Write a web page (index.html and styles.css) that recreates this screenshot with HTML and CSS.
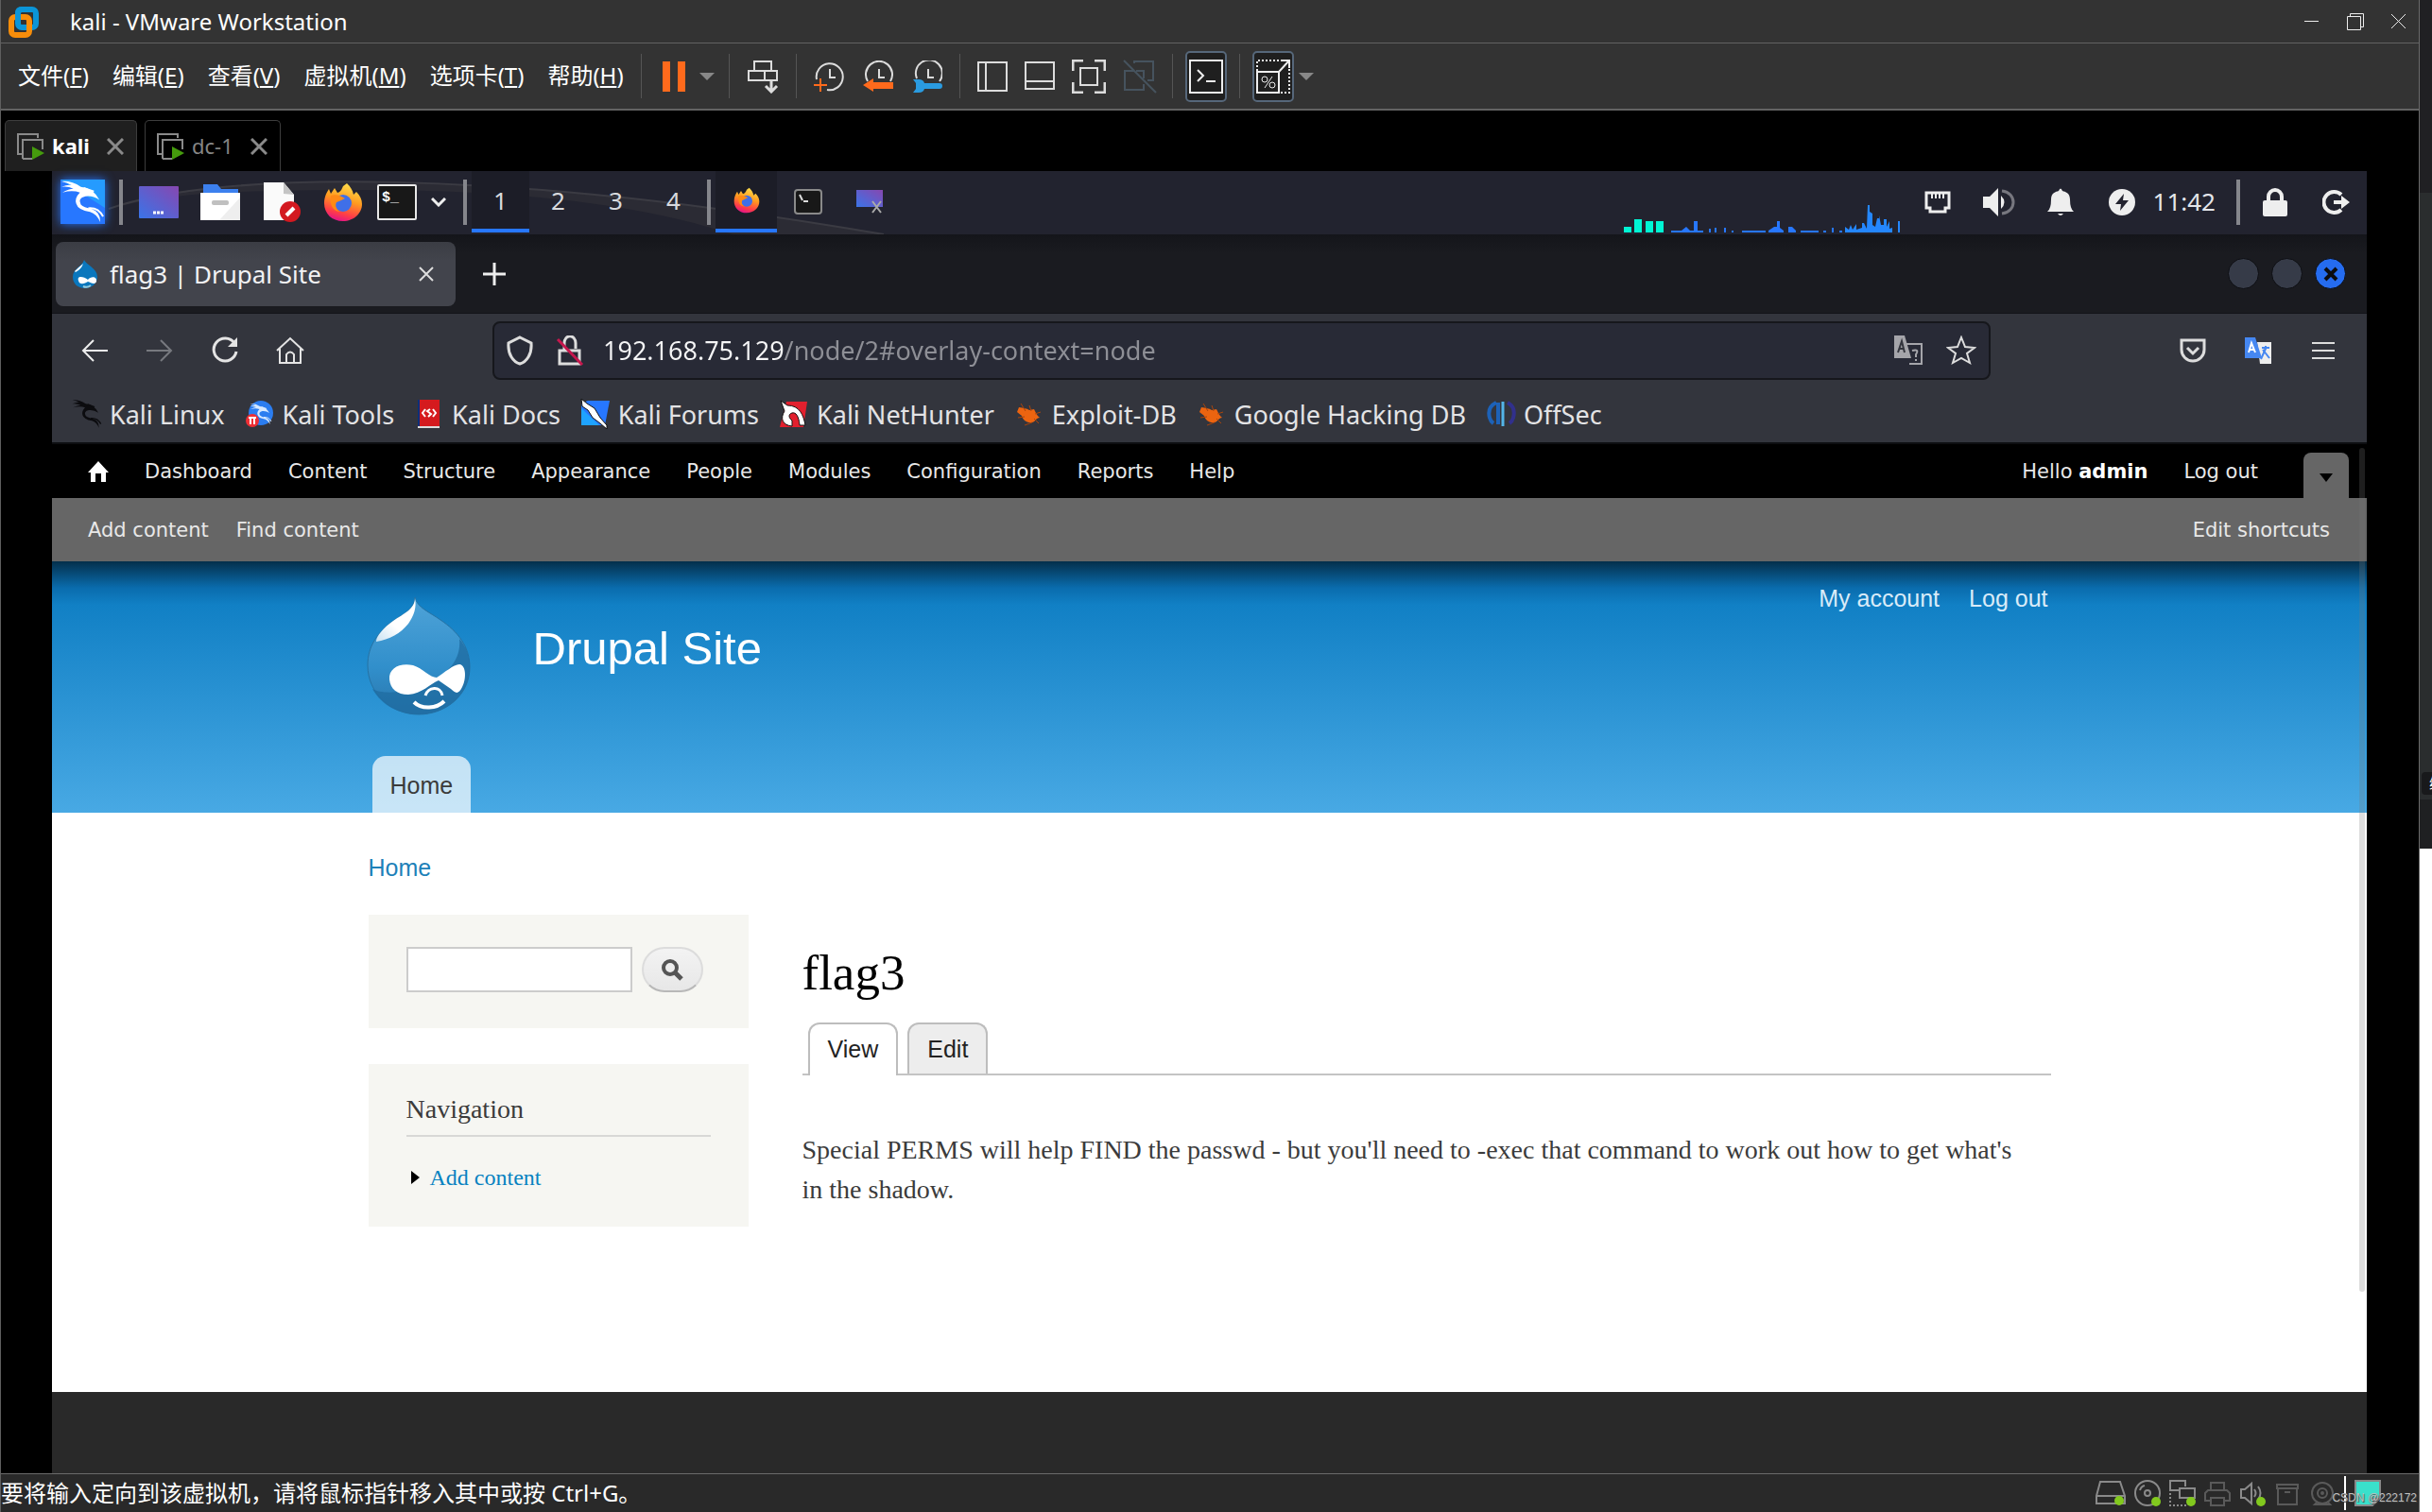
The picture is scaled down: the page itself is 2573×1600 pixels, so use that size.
FILE: index.html
```html
<!DOCTYPE html>
<html lang="zh-CN">
<head>
    <title>kali - VMware Workstation</title>
    <meta charset="utf-8"/>
    <link rel="stylesheet" href="styles.css">
</head>
<body>
    <!-- shared shapes -->
    <svg class="defs" width="0" height="0">
        <defs>
            <linearGradient id="flame" x1="0.7" y1="0" x2="0.4" y2="1">
                <stop offset="0" stop-color="#ffe14d"/>
                <stop offset="0.45" stop-color="#ff9a1f"/>
                <stop offset="0.8" stop-color="#ff3d47"/>
                <stop offset="1" stop-color="#e31587"/>
            </linearGradient>
            <linearGradient id="screen" x1="0" y1="1" x2="1" y2="0">
                <stop offset="0" stop-color="#3a74e8"/>
                <stop offset="1" stop-color="#8747b0"/>
            </linearGradient>
            <linearGradient id="drop" x1="0" y1="0" x2="0" y2="1">
                <stop offset="0" stop-color="#4fa3d8"/>
                <stop offset="0.6" stop-color="#318fcb"/>
                <stop offset="1" stop-color="#2a76ab"/>
            </linearGradient>
            <linearGradient id="shine" x1="0.9" y1="0" x2="0.1" y2="1">
                <stop offset="0.6" stop-color="#ffffff"/>
                <stop offset="1" stop-color="#cfe5f4"/>
            </linearGradient>
            <symbol id="dragon" viewBox="0 0 48 48">
                <path d="M1 2 Q12 1 22 8 Q35 9 42 22 Q35 17 27 18 Q18 20 22 27 Q25 30 34 32 Q43 35 43 46 Q39 37 32 35 Q19 33 17 26 Q15 20 21 14 Q13 11 2 14 Q9 10 14 10 Q8 7 1 8 Q8 5 12 6 Q7 3 1 2 Z" fill="currentColor"/>
                <path d="M25 9 L36 13 M30 31 Q41 30 46 40" stroke="currentColor" stroke-width="2" fill="none"/>
            </symbol>
            <symbol id="firefox" viewBox="0 0 42 42">
                <path d="M21 41 C9 41 1 33 1 22 C1 15 4 10 6 7 L8 12 L12 6 L15 11 C19 10 20 6 21 4 L25 1 C29 5 31 8 32 13 L35 10 C39 14 41 18 41 23 C41 33 32 41 21 41 Z" fill="url(#flame)"/>
                <circle cx="21" cy="22" r="9" fill="#3f6fe8"/>
                <path d="M8 14 C13 12 18 14 23 17 C20 18 18 20 14 21 C12 25 14 29 18 31 C11 31 6 24 8 14 Z" fill="#ff8a16"/>
            </symbol>
            <symbol id="vm" viewBox="0 0 30 30">
                <path d="M6 23 H2 V2 H23 V6 M7 28 V8 H28 V18 M7 28 H17" fill="none" stroke="#8a8a8a" stroke-width="2"/>
                <path d="M17 15 L30 22 L17 29 Z" fill="#459b0d"/>
            </symbol>
            <symbol id="bug" viewBox="0 0 32 32">
                <path d="M5 9 C10 10 13 10 16 12 L21 11 C23 15 24 18 27 20 C23 20 23 24 19 25 C13 26 9 22 8 18 L3 14 Z" fill="#ec6410"/>
                <path d="M7 5 L12 13 M16 7 L18 13 M28 14 L22 16 M26 26 L21 21 M11 28 L19 25 M4 20 L11 19" stroke="#a8440c"/>
            </symbol>
            <symbol id="clockface" viewBox="0 0 32 34">
                <path d="M17 9 V18 H23" fill="none" stroke="#dcdcdc" stroke-width="2"/>
            </symbol>
        </defs>
    </svg>

    <div class="vmware">
        <header class="titlebar">
            <svg class="app-logo" width="34" height="34" viewBox="0 0 34 34" fill="none" stroke-width="6">
                <rect x="11" y="4" width="19" height="19" rx="4" stroke="#0b95d8"/>
                <rect x="4" y="12" width="19" height="19" rx="4" stroke="#f78d0a"/>
                <path d="M11 16 V8 Q11 4 15 4 H20" stroke="#0b95d8"/>
            </svg>
            <span class="app-title">kali - VMware Workstation</span>
            <div class="win-buttons">
                <button aria-label="Minimize"><svg width="20" height="20" stroke="#eee" fill="none"><path d="M2 9.5 H17"/></svg></button>
                <button aria-label="Restore"><svg width="20" height="20" stroke="#eee" fill="none"><path d="M1.500 4.500 H15.500 V18.500 H1.500 Z M4.500 4.500 V1.500 H18.500 V15.500 H15.500"/></svg></button>
                <button aria-label="Close"><svg width="20" height="20" stroke="#eee" fill="none"><path d="M2 2 L17 17 M17 2 L2 17"/></svg></button>
            </div>
        </header>

        <div class="menubar">
            <nav class="menus">
                <button>文件(<u>F</u>)</button>
                <button>编辑(<u>E</u>)</button>
                <button>查看(<u>V</u>)</button>
                <button>虚拟机(<u>M</u>)</button>
                <button>选项卡(<u>T</u>)</button>
                <button>帮助(<u>H</u>)</button>
            </nav>
            <div class="tools tools-power">
                <button aria-label="Pause"><svg width="24" height="32" fill="#ff6a1c"><rect width="8" height="32"/><rect x="16" width="8" height="32"/></svg></button>
                <button aria-label="Power menu"><svg width="16" height="8"><path d="M0 0 H16 L8 8 Z" fill="#888"/></svg></button>
            </div>
            <div class="tools">
                <button aria-label="Send keys"><svg width="34" height="36" viewBox="0 0 34 36" fill="none" stroke="#dcdcdc" stroke-width="2"><path d="M8 12 V2 H26 V12 M2 12 H32 V22 H2 Z M19 12 V22"/><path d="M26 22 V34 M20 28 L26 34 L32 28" stroke-width="3"/></svg></button>
            </div>
            <div class="tools">
                <button aria-label="Take snapshot"><svg width="32" height="34" viewBox="0 0 32 34" fill="none" stroke-width="2"><path d="M3 20 A14 14 0 1 1 14 31" stroke="#dcdcdc"/><use href="#clockface"/><path d="M0 26 H14 M7 19 V33" stroke="#ff6a1c"/></svg></button>
                <button aria-label="Revert snapshot"><svg width="32" height="34" viewBox="0 0 32 34" fill="none" stroke-width="2"><path d="M5 22 A14 14 0 1 1 29 22" stroke="#dcdcdc"/><use href="#clockface"/><path d="M0 26 L11 19 V23 H32 V30 H11 V33 Z" fill="#ff6a1c"/></svg></button>
                <button aria-label="Manage snapshots"><svg width="32" height="34" viewBox="0 0 32 34" fill="none" stroke-width="2"><path d="M5 19 A14 14 0 1 1 29 22" stroke="#dcdcdc"/><use href="#clockface"/><path d="M1 20 H7 Q12 20 13 24 H29 Q32 24 32 27 Q32 30 29 30 H13 Q12 34 7 34 H1 L4 30 V24 Z" fill="#2a9be0"/></svg></button>
            </div>
            <div class="tools tools-view">
                <button aria-label="Library"><svg width="32" height="34" fill="none" stroke="#dcdcdc" stroke-width="2"><path d="M1 2 H31 V32 H1 Z M9 2 V32"/></svg></button>
                <button aria-label="Thumbnails"><svg width="32" height="34" fill="none" stroke="#dcdcdc" stroke-width="2"><path d="M1 2 H31 V30 H1 Z M1 22 H31"/></svg></button>
                <button aria-label="Full screen"><svg width="36" height="36" fill="none" stroke="#dcdcdc" stroke-width="2"><path d="M9 9 H27 V27 H9 Z"/><path d="M1 12 V1 H12 M24 1 H35 V12 M35 24 V35 H24 M12 35 H1 V24" stroke-width="3"/></svg></button>
                <button aria-label="Unity"><svg width="36" height="36" fill="none" stroke="#46535e" stroke-width="2"><path d="M12 4 V2 H32 V22 H26 M12 12 H2 V32 H22 V26 M14 12 H22 V20 M1 1 L35 35"/></svg></button>
            </div>
            <div class="tools tools-console">
                <button class="pressed" aria-label="Console view"><svg width="36" height="36" fill="none" stroke="#eee" stroke-width="2"><path d="M1 1 H35 V35 H1 Z M9 11 L15 17 L9 23 M18 23 H28"/></svg></button>
            </div>
            <div class="tools tools-console">
                <button class="pressed" aria-label="Stretch guest"><svg width="36" height="36" fill="none" stroke="#eee" stroke-width="2"><path d="M1 13 H24 V35 H1 Z M24 13 L35 1 M26 1 H35 V9"/><path d="M1 12 V1 H24 M35 10 V35 H25" stroke-dasharray="2 2"/><g stroke-width="1"><path d="M17 18 L9 30"/><circle cx="9" cy="21" r="3"/><circle cx="17" cy="27" r="3"/></g></svg></button>
                <button aria-label="Stretch menu"><svg width="16" height="8"><path d="M0 0 H16 L8 8 Z" fill="#888"/></svg></button>
            </div>
        </div>

        <div class="vm-tabs">
            <div class="vm-tab active">
                <svg width="30" height="30"><use href="#vm"/></svg>
                <span>kali</span>
                <button aria-label="Close kali"><svg width="18" height="18" stroke="#8a8a8a" stroke-width="3"><path d="M1 1 L17 17 M17 1 L1 17"/></svg></button>
            </div>
            <div class="vm-tab">
                <svg width="30" height="30"><use href="#vm"/></svg>
                <span>dc-1</span>
                <button aria-label="Close dc-1"><svg width="18" height="18" stroke="#8a8a8a" stroke-width="3"><path d="M1 1 L17 17 M17 1 L1 17"/></svg></button>
            </div>
        </div>

        <div class="guest">
            <!-- xfce panel -->
            <div class="panel">
                <svg class="wallpaper" width="1000" height="67" viewBox="0 0 1000 67">
                    <path d="M60 40 C180 -2 480 -2 880 67 H720 C560 15 350 18 200 22 C140 24 100 30 60 40 Z" fill="#2b2b34"/>
                    <path d="M60 40 C180 -2 480 -2 880 67" fill="none" stroke="#3b3b43" stroke-width="2"/>
                </svg>
                <svg class="kali-logo" width="47" height="47" viewBox="0 0 47 47"><rect width="47" height="47" fill="#2777ff"/><path d="M0 0 H47 V30 Z" fill="#259bff"/><use href="#dragon" width="47" height="47" color="#fff"/></svg>
                <i class="bar"></i>
                <span class="launcher"><svg width="42" height="34"><rect width="42" height="34" rx="1" fill="url(#screen)"/><path d="M15 28 H27" stroke="#fff" stroke-width="3" stroke-dasharray="3 1"/></svg></span>
                <span class="launcher"><svg width="42" height="38"><path d="M3 0 H18 L22 5 H40 V14 H3 Z" fill="#3c80ee"/><rect y="9" width="42" height="29" fill="#fff"/><path d="M42 14 V38 H20 Z" fill="#eee"/><rect x="12" y="17" width="18" height="5" rx="2" fill="#c0c0c0"/></svg></span>
                <span class="launcher"><svg width="40" height="42"><path d="M1 0 H22 L33 13 V40 H1 Z" fill="#fafafa"/><path d="M22 0 V12 L33 13 Z" fill="#c4c4c4"/><circle cx="29" cy="31" r="11" fill="#d31920"/><path d="M25 35 L33 27" stroke="#fff" stroke-width="4"/></svg></span>
                <span class="launcher"><svg width="42" height="42"><use href="#firefox"/></svg></span>
                <svg class="terminal" width="42" height="38"><rect x="1" y="1" width="40" height="36" rx="1" fill="#181818" stroke="#e8e8e8" stroke-width="2"/><text x="5" y="18" class="prompt">$_</text></svg>
                <svg class="chevron" width="16" height="10" fill="none" stroke="#eee" stroke-width="3"><path d="M1 1 L8 8 L15 1"/></svg>
                <i class="bar bar-tight"></i>
                <div class="workspaces">
                    <button class="current">1</button>
                    <button>2</button>
                    <button>3</button>
                    <button>4</button>
                </div>
                <i class="bar bar-tight"></i>
                <span class="task current"><svg width="28" height="28"><use href="#firefox"/></svg></span>
                <span class="task"><svg width="30" height="27"><rect x="1" y="1" width="28" height="25" rx="3" fill="#181818" stroke="#8a8a8a" stroke-width="2"/><path d="M6 6 L9 12 M10 13 H15" stroke="#ddd" stroke-width="2"/></svg></span>
                <span class="task"><svg width="28" height="26"><rect width="28" height="18" fill="url(#screen)"/><path d="M17 12 L26 24 M26 12 L17 24" stroke="#aaa" stroke-width="2"/></svg></span>

                <svg class="netgraph" width="292" height="30" viewBox="0 0 292 30">
                    <path d="M0 30 V24 H8 V30 Z M11 30 V16 H19 V30 Z M23 30 V18 H31 V30 Z M34 30 V18 H42 V30 Z" fill="#00f5d4"/>
                    <path d="M50 28 H58 L61 28 L66 24 L70 28 H74 V18 H78 V28 H84 V30 H50 Z M90 30 V26 H92 V30 Z M96 30 V25 H98 V30 Z M106 30 V25 H108 V30 Z M114 28 H116 V30 H114 Z M125 28 H150 V30 H125 Z M153 28 L159 24 H162 V18 H165 V25 L169 28 V30 H153 Z M174 30 V24 H178 L182 28 V30 Z M187 28 H206 V30 H187 Z M211 28 H214 V30 H211 Z M220 30 V25 H222 V30 Z M228 28 H231 V30 H228 Z" fill="#2777ff"/>
                    <path d="M234 30 V24 L238 27 L240 22 L242 27 L246 21 V27 L252 25 V20 H254 L257 26 L258 1 H260 V8 L263 10 V22 L266 24 L268 15 H270 V12 L272 22 H275 V16 H278 V24 L281 18 V26 L284 25 V30 Z M290 30 V18 H292 V30 Z" fill="#2487ff"/>
                </svg>
                <span class="launcher"><svg width="28" height="24"><path d="M2 2 H26 V18 H22 V22 H6 V18 H2 Z" fill="none" stroke="#eee" stroke-width="3"/><path d="M8 3 V8 M12 3 V8 M16 3 V8 M20 3 V8" stroke="#eee" stroke-width="2"/></svg></span>
                <span class="launcher"><svg width="34" height="30"><path d="M0 9 H7 L16 0 V30 L7 21 H0 Z" fill="#eee"/><path d="M19 8 Q26 15 19 22 Z" fill="#eee"/><path d="M20 3 C36 5 36 25 20 27" fill="none" stroke="#77777f" stroke-width="3"/></svg></span>
                <span class="launcher"><svg width="28" height="30"><path d="M0 25 Q4 22 4 12 C4 5 9 4 12 3 Q14 -2 16 3 C19 4 24 5 24 12 Q24 22 28 25 Z M11 27 H17 Q14 31 11 27 Z" fill="#eee"/></svg></span>
                <span class="launcher"><svg width="28" height="28"><circle cx="14" cy="14" r="14" fill="#eee"/><path d="M16 5 L7 16 H13 L12 23 L21 12 H15 Z" fill="#23232f"/></svg></span>
                <time class="clock">11:42</time>
                <i class="bar bar-clock"></i>
                <span class="launcher"><svg width="26" height="30"><rect y="13" width="26" height="17" rx="2" fill="#eee"/><path d="M6 14 V9 A7 7 0 0 1 20 9 V14" fill="none" stroke="#eee" stroke-width="4"/></svg></span>
                <span class="launcher"><svg width="30" height="26"><path d="M20 5 A11 11 0 1 0 20 21" fill="none" stroke="#eee" stroke-width="4"/><path d="M12 11 H20 V6 L29 13 L20 20 V15 H12 Z" fill="#eee"/></svg></span>
            </div>

            <!-- firefox -->
            <div class="tabstrip">
                <div class="ff-tab">
                    <svg width="28" height="30" viewBox="0 0 28 30"><path d="M13 0 C15 5 27 9 27 18 C27 25 21 30 14 30 C6 30 1 25 1 18 C1 9 11 7 13 0 Z" fill="#0a77bd"/><path d="M3 12 Q7 8 12 4 Q10 10 4 13 Z M7 22 C5 16 13 18 17 21 C20 17 27 17 26 23 C24 27 20 24 17 23 C14 25 8 27 7 22 Z" fill="#fff"/><path d="M12 28 Q16 30 20 27" stroke="#9cd" fill="none" stroke-width="2"/></svg>
                    <span>flag3 | Drupal Site</span>
                    <button aria-label="Close tab"><svg width="16" height="16" stroke="#ddd" stroke-width="2"><path d="M1 1 L15 15 M15 1 L1 15"/></svg></button>
                </div>
                <button class="new-tab" aria-label="New tab"><svg width="24" height="24" stroke="#eee" stroke-width="3"><path d="M12 0 V24 M0 12 H24"/></svg></button>
                <div class="circles">
                    <button aria-label="Minimize"></button>
                    <button aria-label="Maximize"></button>
                    <button class="close" aria-label="Close"><svg width="16" height="16" stroke="#0b0c10" stroke-width="4"><path d="M2 2 L14 14 M14 2 L2 14"/></svg></button>
                </div>
            </div>

            <div class="navbar">
                <button aria-label="Back"><svg width="28" height="24" fill="none" stroke="#eee" stroke-width="2"><path d="M28 12 H2 M13 1 L2 12 L13 23"/></svg></button>
                <button aria-label="Forward"><svg width="28" height="24" fill="none" stroke="#77797f" stroke-width="2"><path d="M0 12 H26 M15 1 L26 12 L15 23"/></svg></button>
                <button aria-label="Reload"><svg width="30" height="30" fill="none" stroke="#e4e4e4" stroke-width="3"><path d="M25 7 A12 12 0 1 0 27 16"/><path d="M28 1 V11 H18 Z" fill="#e4e4e4" stroke="none"/></svg></button>
                <button aria-label="Home"><svg width="30" height="30" fill="none" stroke="#e4e4e4" stroke-width="2"><path d="M1 15 L15 2 L29 15 M4 13 V28 H26 V13 M11 28 V19 Q15 14 19 19 V28"/></svg></button>
                <div class="urlbar">
                    <svg width="28" height="32" fill="none" stroke="#ddd" stroke-width="3"><path d="M14 2 L26 8 C27 20 21 28 14 30 C7 28 1 20 2 8 Z"/></svg>
                    <svg width="30" height="32" fill="none" stroke="#ddd" stroke-width="3"><path d="M4 16 H25 V30 H4 Z M9 16 V8 A5 6 0 0 1 21 8 V14"/><path d="M2 4 L28 31" stroke="#c6174d"/></svg>
                    <input type="text" aria-label="Address" value="192.168.75.129/node/2#overlay-context=node">
                    <svg width="32" height="32"><path d="M13 9 H30 V30 H17" fill="none" stroke="#a5a5aa" stroke-width="2"/><path d="M1 0 H12 L19 24 H1 Z" fill="#a5a5aa"/><path d="M5 18 L9 6 L12 18 M6 14 H11" stroke="#33353d" stroke-width="2" fill="none"/><path d="M20 16 Q28 14 24 20 V23 M24 25 V27" stroke="#a5a5aa" stroke-width="2" fill="none"/></svg>
                    <svg width="32" height="32" fill="none" stroke="#ddd" stroke-width="2"><path d="M16 2 L20 12 L30 13 L22 19 L25 29 L16 24 L7 29 L10 19 L2 13 L12 12 Z"/></svg>
                </div>
                <button aria-label="Pocket"><svg width="28" height="26" fill="none" stroke="#ddd" stroke-width="3"><path d="M2 2 H26 V12 A12 12 0 0 1 2 12 Z M8 10 L14 16 L20 10"/></svg></button>
                <button aria-label="Translate"><svg width="30" height="30"><path d="M14 6 H29 V29 H17 Z" fill="#eee"/><path d="M1 1 H12 L19 23 H1 Z" fill="#4587f2"/><path d="M5 17 L8 7 L12 17 M6 14 H11" stroke="#fff" stroke-width="2" fill="none"/><path d="M19 12 H27 M23 10 V13 L18 24 M20 14 L27 23" stroke="#4587f2" stroke-width="2"/></svg></button>
                <button aria-label="Menu"><svg width="24" height="20" stroke="#ddd" stroke-width="2"><path d="M0 2 H24 M0 10 H24 M0 18 H24"/></svg></button>
            </div>

            <nav class="bookmarks">
                <a href="#"><svg width="32" height="32" color="#0c0c0f"><use href="#dragon"/></svg>Kali Linux</a>
                <a href="#"><svg width="32" height="32" color="#d5e8ff"><circle cx="17" cy="15" r="13" fill="#2b7df0"/><use href="#dragon" x="5" y="4" width="24" height="24"/><circle cx="8" cy="23" r="7" fill="#ee2f35"/><path d="M4 20 H12 M6 20 V27 M10 20 V27" stroke="#fff" stroke-width="2"/></svg>Kali Tools</a>
                <a href="#"><svg width="32" height="32"><rect x="4" y="1" width="23" height="30" fill="#d51a1e"/><path d="M5 1 V31" stroke="#0c2f7a" stroke-width="2"/><path d="M4 30 H27" stroke="#ddd" stroke-width="2"/><path d="M12 11 L9 15 L12 19 M20 11 L23 15 L20 19 M17 11 L14 13 L18 16 L15 19" stroke="#fff" stroke-width="2" fill="none"/></svg>Kali Docs</a>
                <a href="#"><svg width="32" height="32"><path d="M1 5 L8 2 H31 L26 28 H1 Z" fill="#2777ff"/><path d="M1 28 V10 L20 28 Z" fill="#1fa3ff"/><path d="M1 0 L7 5 L15 10 L21 20 L28 28 V32 L21 26 L13 20 L8 12 L2 8 Z" fill="#fff" stroke="#111" stroke-width="1"/></svg>Kali Forums</a>
                <a href="#"><svg width="32" height="32"><path d="M8 3 H30 L26 30 H1 Z" fill="#e2202e"/><path d="M2 2 L9 7 C22 7 26 17 28 28 H22 C21 18 18 14 14 15 C10 16 10 20 14 23 V29 C4 28 1 21 6 13 Z" fill="#fff" stroke="#111" stroke-width="1"/></svg>Kali NetHunter</a>
                <a href="#"><svg width="32" height="32"><use href="#bug"/></svg>Exploit-DB</a>
                <a href="#"><svg width="32" height="32"><use href="#bug"/></svg>Google Hacking DB</a>
                <a href="#"><svg width="32" height="32" fill="none" stroke-width="4"><path d="M11 4 Q1 9 4 20 Q5 24 8 26 M13 4 V27" stroke="#1d62b8"/><path d="M18 3 V29" stroke="#53b5e8" stroke-width="3"/><path d="M23 4 Q32 9 29 20 Q28 24 25 26" stroke="#31308c"/></svg>OffSec</a>
            </nav>

            <!-- drupal page -->
            <div class="page">
                <i class="scroll-thumb"></i>
                <div class="admin-bar">
                    <a href="#" aria-label="Home"><svg width="22" height="22" fill="#fff"><path d="M11 0 L22 12 H19 V22 H14 V13 H8 V22 H3 V12 H0 Z"/></svg></a>
                    <a href="#">Dashboard</a>
                    <a href="#">Content</a>
                    <a href="#">Structure</a>
                    <a href="#">Appearance</a>
                    <a href="#">People</a>
                    <a href="#">Modules</a>
                    <a href="#">Configuration</a>
                    <a href="#">Reports</a>
                    <a href="#">Help</a>
                    <a href="#" class="hello">Hello <b>admin</b></a>
                    <a href="#">Log out</a>
                    <button class="drawer-toggle" aria-label="Toggle shortcuts"><svg width="14" height="9"><path d="M0 0 H14 L7 9 Z"/></svg></button>
                </div>
                <div class="shortcuts">
                    <a href="#">Add content</a>
                    <a href="#">Find content</a>
                    <a href="#" class="edit-shortcuts">Edit shortcuts</a>
                </div>

                <header class="site-header">
                    <div class="wrap">
                        <div class="branding">
                            <svg class="drop" width="110" height="126" viewBox="0 0 110 126">
                                <path d="M51 1 C53 12 67 17 78 25 C96 37 109 53 109 75 C109 104 84 125 55 125 C26 125 1 103 1 73 C1 52 12 38 28 26 C40 18 51 13 51 1 Z" fill="url(#drop)" stroke="#2672a3"/>
                                <path d="M98 45 C100 66 88 82 60 94 C35 104 15 103 6 98 C16 116 35 125 55 125 C84 125 109 104 109 75 C109 63 105 53 98 45 Z" fill="#1f6da3" opacity="0.8"/>
                                <path d="M51 2 C53 12 50 20 44 29 C36 39 24 46 10 48 C10 42 18 33 28 26 C40 18 51 13 51 2 Z" fill="url(#shine)"/>
                                <path d="M24 88 C23 76 35 70 49 73 C59 76 67 86 74 86 C82 81 92 72 98 72 C106 73 105 89 101 96 C97 104 94 103 89 98 L76 89 C66 93 59 103 44 104 C32 104 25 98 24 88 Z" fill="#fff"/>
                                <path d="M62 105 C65 96 78 94 80 105" fill="none" stroke="#fff" stroke-width="3"/>
                                <path d="M50 112 C58 120 74 119 82 111" fill="none" stroke="#fff" stroke-width="4"/>
                            </svg>
                            <a href="#" class="site-name">Drupal Site</a>
                            <nav class="user-menu">
                                <a href="#">My account</a>
                                <a href="#">Log out</a>
                            </nav>
                        </div>
                        <a href="#" class="main-tab">Home</a>
                    </div>
                </header>

                <div class="wrap">
                    <a href="#" class="breadcrumb">Home</a>
                    <div class="columns">
                        <aside class="sidebar">
                            <form class="block search">
                                <input type="text" aria-label="Search">
                                <button type="button" aria-label="Search"><svg width="26" height="26" fill="none" stroke="#555"><circle cx="11" cy="11" r="7" stroke-width="4"/><path d="M16 16 L23 23" stroke-width="5"/></svg></button>
                            </form>
                            <div class="block navigation">
                                <h2>Navigation</h2>
                                <ul>
                                    <li><svg width="9" height="14"><path d="M0 0 L9 7 L0 14 Z"/></svg><a href="#">Add content</a></li>
                                </ul>
                            </div>
                        </aside>
                        <main class="content">
                            <h1>flag3</h1>
                            <div class="page-tabs">
                                <a href="#" class="selected">View</a>
                                <a href="#">Edit</a>
                            </div>
                            <p>Special PERMS will help FIND the passwd - but you'll need to -exec that command to work out how to get what's in the shadow.</p>
                        </main>
                    </div>
                </div>
            </div>
        </div>

        <footer class="statusbar">
            <span class="hint">要将输入定向到该虚拟机，请将鼠标指针移入其中或按 Ctrl+G。</span>
            <div class="devices">
                <svg width="32" height="28" fill="none" stroke="#8a8a8a" stroke-width="2"><path d="M5 2 H26 L31 17 V25 H1 V17 Z M1 17 H31"/><circle cx="25" cy="22" r="5" fill="#82c91e" stroke="none"/></svg>
                <svg width="28" height="28" fill="none" stroke="#8a8a8a" stroke-width="2"><circle cx="14" cy="14" r="13"/><circle cx="14" cy="14" r="3"/><path d="M6 11 Q7 7 11 6"/><circle cx="23" cy="23" r="5" fill="#82c91e" stroke="none"/></svg>
                <svg width="28" height="28" fill="none" stroke="#8a8a8a" stroke-width="2"><path d="M10 11 H1 V1 H17 V7 M11 9 H27 V19 H11 Z"/><path d="M1 14 V27 H18" stroke-dasharray="2 2"/><circle cx="23" cy="23" r="5" fill="#82c91e" stroke="none"/></svg>
                <svg width="28" height="28" fill="none" stroke="#5a5a5a" stroke-width="2"><path d="M7 11 V3 H21 V11 M7 22 H1 V14 L4 11 H24 L27 14 V22 H21 M7 19 H21 V27 H7 Z"/></svg>
                <svg width="28" height="28" fill="none" stroke="#8a8a8a" stroke-width="2"><path d="M2 10 H6 L13 4 V25 L6 19 H2 Z M16 10 Q19 14 16 18 M20 7 Q25 14 20 21"/><circle cx="23" cy="23" r="5" fill="#82c91e" stroke="none"/></svg>
                <svg width="28" height="28" fill="none" stroke="#5a5a5a" stroke-width="2"><path d="M3 5 H25 V9 H3 Z M4 9 V26 H24 V9 M11 13 H17"/></svg>
                <svg width="28" height="28" fill="none" stroke="#5a5a5a" stroke-width="2"><circle cx="14" cy="14" r="11"/><circle cx="14" cy="14" r="5"/><circle cx="14" cy="14" r="1"/><path d="M8 24 L6 26 H22 L20 24"/></svg>
                <i class="bar"></i>
                <svg width="28" height="28"><path d="M1 1 H27 V19 L19 27 H1 Z" fill="#3ae0cb" stroke="#888" stroke-width="2"/><path d="M19 27 V19 H27 Z" fill="#888"/></svg>
            </div>
            <span class="watermark">CSDN @222172</span>
        </footer>
    </div>

    <!-- edge of the window underneath -->
    <div class="behind">
        <div class="behind-top"></div>
        <div class="behind-mid"><span>编</span></div>
        <div class="behind-low"></div>
    </div>
</body>
</html>
```
FILE: styles.css
```css
* {
    box-sizing: border-box;
}

body {
    margin: 0;
    display: flex;
    min-height: 100vh;
    background-color: #000000;
    color: #ffffff;
    font-family: "Noto Sans", "Noto Sans CJK SC", sans-serif;
    font-size: 24px;
    overflow: hidden;
}

a {
    color: inherit;
    text-decoration: none;
}

button {
    margin: 0;
    padding: 0;
    border: none;
    background: none;
    color: inherit;
    font: inherit;
}

svg {
    display: block;
    flex: none;
}

.defs {
    position: absolute;
}

.vmware {
    flex: 1;
    display: flex;
    flex-direction: column;
    border-left: 1px solid #5f5f5f;
    border-right: 1px solid #6a6a6a;
    min-width: 0;
}

/* title bar and menus */
.titlebar {
    display: flex;
    align-items: center;
    height: 46px;
    padding: 0 11px 0 7px;
    background-color: #333333;
    border-bottom: 1px solid #626262;
}

.app-title {
    margin-left: 32px;
}

.win-buttons {
    display: flex;
    gap: 26px;
    margin-left: auto;
}

.menubar {
    display: flex;
    align-items: center;
    height: 71px;
    background-color: #333333;
    border-bottom: 2px solid #626262;
}

.menus {
    display: flex;
    gap: 25px;
    padding: 0 18px 4px;
}

.tools {
    display: flex;
    align-items: center;
    gap: 20px;
    height: 47px;
    padding: 0 18px;
    border-left: 1px solid #555555;
}

.tools-power {
    gap: 15px;
    padding: 0 15px 0 22px;
}

.tools-view {
    gap: 18px;
    padding-right: 16px;
}

.tools-console {
    padding: 0 13px;
    gap: 5px;
}

.tools .pressed {
    padding: 7px 2px;
    border: 2px solid #56677a;
    border-radius: 5px;
    background-color: #1f1f1f;
}

.vm-tabs {
    display: flex;
    align-items: flex-end;
    gap: 8px;
    height: 64px;
    padding-left: 4px;
}

.vm-tab {
    display: flex;
    align-items: center;
    height: 54px;
    padding: 0 13px 0 11px;
    border: 1px solid #3d3d3d;
    border-bottom: none;
    border-radius: 5px 5px 0 0;
    color: #858585;
    font-size: 22px;
}

.vm-tab span {
    margin: 0 18px 2px 8px;
}

.vm-tab.active {
    background-color: #1f1f1f;
    color: #ffffff;
    font-weight: bold;
}

/* guest desktop */
.guest {
    flex: 1;
    margin: 0 55px 0 54px;
    background-color: #292929;
}

.panel {
    position: relative;
    display: flex;
    align-items: center;
    height: 67px;
    padding: 0 0 2px 9px;
    background-color: #22232f;
    font-size: 26px;
}

.wallpaper {
    position: absolute;
    left: 0;
    top: 0;
}

.panel > * {
    z-index: 1;
}

.panel > .wallpaper {
    z-index: 0;
}

.kali-logo {
    box-shadow: 0 0 10px #2777ff;
}

.bar {
    flex: none;
    width: 4px;
    height: 48px;
    margin: 0 5px 0 15px;
    background-color: #85868c;
}

.bar-tight {
    margin: 0 5px;
}

.launcher, .task {
    display: flex;
    align-items: center;
    justify-content: center;
    width: 65px;
    height: 65px;
}

.terminal {
    margin: 0 15px 0 4px;
}

.prompt {
    fill: #ffffff;
    font: bold 15px "Liberation Mono", monospace;
}

.chevron {
    margin-right: 13px;
}

.workspaces {
    display: flex;
}

.workspaces button {
    width: 61px;
    height: 65px;
    color: #d8dade;
    border-bottom: 4px solid transparent;
}

.workspaces .current, .task.current {
    background-color: #1c1d27;
    border-bottom: 4px solid #2777ff;
}

.netgraph {
    align-self: flex-end;
    margin: 0 8px 0 auto;
}

.clock {
    padding-bottom: 2px;
    color: #e4e6ea;
}

.bar-clock {
    margin: 0 4px 0 22px;
}

/* browser */
.tabstrip {
    display: flex;
    align-items: center;
    height: 84px;
    padding: 0 22px 0 4px;
    background: linear-gradient(#14151a, #1a1b20 20px);
    border-bottom: 1px solid #121318;
    color: #f2f2f4;
    font-size: 26px;
}

.ff-tab {
    display: flex;
    align-items: center;
    width: 423px;
    height: 68px;
    padding: 1px 23px 0 17px;
    border-radius: 8px;
    background: linear-gradient(#3b3d44, #42444c 20px);
}

.ff-tab span {
    flex: 1;
    margin-left: 12px;
}

.new-tab {
    margin-left: 29px;
}

.circles {
    display: flex;
    gap: 13px;
    margin-left: auto;
}

.circles button {
    display: flex;
    align-items: center;
    justify-content: center;
    width: 33px;
    height: 33px;
    border: 1px solid #0d0e12;
    border-radius: 50%;
    background-color: #363b48;
}

.circles .close {
    background-color: #256cf0;
}

.navbar {
    display: flex;
    align-items: center;
    height: 76px;
    padding: 1px 12px 0 10px;
    background-color: #33353d;
}

.navbar > button {
    display: flex;
    justify-content: center;
    width: 69px;
}

.urlbar {
    flex: 1;
    display: flex;
    align-items: center;
    gap: 24px;
    height: 62px;
    margin: 0 179px 0 180px;
    padding: 0 13px;
    border: 2px solid #16171c;
    border-radius: 8px;
    background-color: #282a36;
}

.urlbar input {
    flex: 1;
    margin-left: -4px;
    padding: 0;
    border: none;
    /* host part brighter than the path */
    background: linear-gradient(to right, #f5f5f6 192px, #8e8f96 192px);
    -webkit-background-clip: text;
    background-clip: text;
    color: transparent;
    font: 27px "Noto Sans", sans-serif;
}

.bookmarks {
    display: flex;
    align-items: center;
    gap: 21px;
    height: 62px;
    padding-left: 21px;
    background-color: #33353d;
    border-bottom: 2px solid #0d0e11;
    color: #e3e3e5;
    font-size: 27px;
}

.bookmarks a {
    display: flex;
    align-items: center;
    gap: 8px;
}

/* drupal */
.page {
    position: relative;
    padding-bottom: 175px;
    background-color: #ffffff;
    font-family: "Liberation Sans", Arial, sans-serif;
}

.scroll-thumb {
    position: absolute;
    top: 4px;
    right: 2px;
    width: 6px;
    height: 893px;
    border-radius: 3px;
    background-color: rgba(120, 120, 120, 0.25);
}

.admin-bar, .shortcuts {
    display: flex;
    align-items: center;
    gap: 38px;
    height: 57px;
    padding: 0 19px 0 38px;
    background-color: #000000;
    color: #e8e8e8;
    font-family: "DejaVu Sans", Verdana, sans-serif;
    font-size: 21px;
}

.hello {
    margin-left: auto;
}

.hello b {
    color: #ffffff;
}

.drawer-toggle {
    display: flex;
    align-items: center;
    justify-content: center;
    align-self: flex-end;
    width: 48px;
    height: 48px;
    margin-left: 10px;
    padding-top: 4px;
    border-radius: 8px 8px 0 0;
    background-color: #666666;
}

.shortcuts {
    gap: 29px;
    height: 67px;
    padding-right: 39px;
    background-color: #666666;
}

.edit-shortcuts {
    margin-left: auto;
}

.wrap {
    width: 1780px;
    max-width: 100%;
    margin: 0 auto;
}

.site-header {
    height: 266px;
    background: linear-gradient(#042f4b, #0a6cad 28px, #1180c5 46px, #48a9e4);
    color: #ffffff;
}

.site-header .wrap {
    display: flex;
    flex-direction: column;
    align-items: flex-start;
    justify-content: space-between;
    height: 100%;
}

.branding {
    display: flex;
    width: 100%;
}

.drop {
    margin: 37px 66px 0 -2px;
}

.site-name {
    margin-top: 64px;
    font-size: 49px;
    line-height: 56px;
}

.user-menu {
    display: flex;
    gap: 31px;
    margin: 24px 3px 0 auto;
    color: #d9ebf8;
    font-size: 25px;
    line-height: 30px;
}

.main-tab {
    margin-left: 4px;
    padding: 2px 19px 0;
    border-radius: 14px 14px 0 0;
    background-color: rgba(255, 255, 255, 0.7);
    color: #3b3b3b;
    font-size: 25px;
    line-height: 58px;
}

.breadcrumb {
    display: block;
    padding: 42px 0 34px;
    color: #1e81b9;
    font-size: 25px;
    line-height: 32px;
}

.columns {
    display: flex;
    gap: 57px;
}

.sidebar {
    width: 402px;
    font-family: "Liberation Serif", serif;
}

.block {
    padding: 34px 40px;
    background-color: #f6f6f2;
}

.search {
    display: flex;
    gap: 10px;
    height: 120px;
    margin-bottom: 38px;
}

.search input {
    width: 239px;
    height: 48px;
    border: 2px solid #cccccc;
    background-color: #ffffff;
}

.search button {
    display: flex;
    align-items: center;
    justify-content: center;
    width: 65px;
    height: 48px;
    border: 2px solid #dcdcdc;
    border-bottom-color: #b8b8b8;
    border-radius: 24px;
    background: linear-gradient(#f3f3f3, #e7e7e7);
}

.navigation {
    padding-top: 32px;
    padding-bottom: 36px;
}

.navigation h2 {
    margin: 0;
    padding-bottom: 11px;
    border-bottom: 2px solid #d8d8d6;
    color: #3b3b3b;
    font-size: 28px;
    font-weight: normal;
    line-height: 32px;
}

.navigation ul {
    margin: 0;
    padding: 27px 0 0 5px;
    list-style: none;
}

.navigation li {
    display: flex;
    align-items: center;
    gap: 11px;
    color: #0782c1;
    line-height: 32px;
}

.content {
    flex: 1;
    padding-top: 30px;
}

.content h1 {
    margin: 0 0 22px;
    color: #000000;
    font-family: "Liberation Serif", serif;
    font-size: 53px;
    font-weight: normal;
    line-height: 62px;
}

.page-tabs {
    display: flex;
    gap: 10px;
    padding-left: 6px;
    border-bottom: 2px solid #c4c4c4;
    color: #222222;
    font-size: 25px;
}

.page-tabs a {
    height: 54px;
    padding: 0 19px;
    border: 2px solid #bdbdbd;
    border-bottom: none;
    border-radius: 12px 12px 0 0;
    background-color: #ededed;
    line-height: 52px;
}

.page-tabs .selected {
    margin-bottom: -2px;
    height: 56px;
    background-color: #ffffff;
}

.content p {
    margin: 58px 0 0;
    padding-right: 20px;
    color: #3b3b3b;
    font-family: "Liberation Serif", serif;
    font-size: 28px;
    line-height: 42px;
}

/* status bar */
.statusbar {
    position: relative;
    display: flex;
    align-items: center;
    justify-content: space-between;
    height: 41px;
    padding-right: 40px;
    border-top: 1px solid #6a6a6a;
    background-color: #292929;
}

.hint {
    padding-bottom: 4px;
}

.devices {
    display: flex;
    align-items: center;
    gap: 9px;
}

.devices .bar {
    width: 2px;
    height: 36px;
    margin: 0;
    background-color: #ffffff;
}

.watermark {
    position: absolute;
    right: 2px;
    bottom: 8px;
    color: #c0c0c0;
    font: 12px "Liberation Sans", Arial, sans-serif;
    text-shadow: 1px 1px 1px #444444;
}

.behind {
    width: 13px;
    display: flex;
    flex-direction: column;
    overflow: hidden;
    background-color: #ffffff;
}

.behind-top {
    height: 204px;
    background-color: #202023;
}

.behind-mid {
    display: flex;
    flex-direction: column;
    justify-content: flex-end;
    height: 642px;
    padding: 0 0 5px 2px;
    background-color: #2a2d2e;
}

.behind-mid span {
    width: 60px;
    padding-left: 8px;
    border-radius: 4px;
    background-color: #18191b;
    font-size: 16px;
    line-height: 24px;
}

.behind-low {
    height: 52px;
    background-color: #1f2022;
}
```
